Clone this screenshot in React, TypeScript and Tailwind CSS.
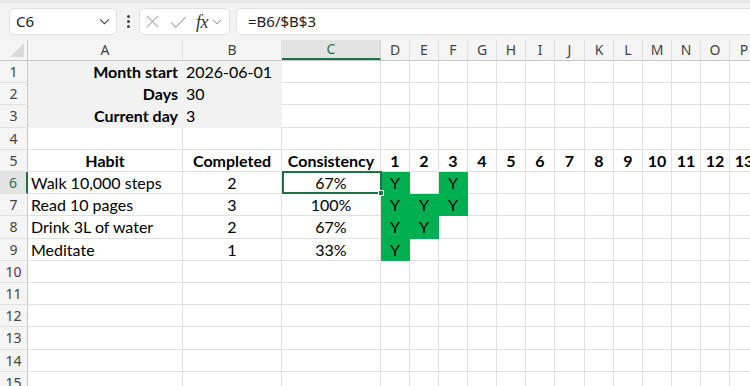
import React from 'react';

const cols = [
	{ key: 'A', w: 155 },
	{ key: 'B', w: 99 },
	{ key: 'C', w: 99 },
	{ key: 'D', w: 29 },
	{ key: 'E', w: 29 },
	{ key: 'F', w: 29 },
	{ key: 'G', w: 29 },
	{ key: 'H', w: 29 },
	{ key: 'I', w: 29 },
	{ key: 'J', w: 30 },
	{ key: 'K', w: 29 },
	{ key: 'L', w: 29 },
	{ key: 'M', w: 29 },
	{ key: 'N', w: 29 },
	{ key: 'O', w: 29 },
	{ key: 'P', w: 29 },
];

const rowHeights = [22, 22, 23, 22, 22, 22, 22, 23, 22, 22, 22, 22, 23, 22, 22];

type Cell = { v?: string; bold?: boolean; align?: 'left' | 'center' | 'right'; fill?: 'gray' | 'green' };

const habits = [
	{ name: 'Walk 10,000 steps', done: '2', pct: '67%', days: ['Y', '', 'Y'] },
	{ name: 'Read 10 pages', done: '3', pct: '100%', days: ['Y', 'Y', 'Y'] },
	{ name: 'Drink 3L of water', done: '2', pct: '67%', days: ['Y', 'Y', ''] },
	{ name: 'Meditate', done: '1', pct: '33%', days: ['Y', '', ''] },
];

const buildRows = (): Cell[][] => {
	const rows: Cell[][] = [];
	const info = [
		['Month start', '2026-06-01'],
		['Days', '30'],
		['Current day', '3'],
	];
	info.forEach(([label, value]) => {
		rows.push([
			{ v: label, bold: true, align: 'right', fill: 'gray' },
			{ v: value, align: 'left', fill: 'gray' },
		]);
	});
	rows.push([]);
	const head: Cell[] = [
		{ v: 'Habit', bold: true, align: 'center' },
		{ v: 'Completed', bold: true, align: 'center' },
		{ v: 'Consistency', bold: true, align: 'center' },
	];
	for (let d = 1; d <= 13; d++) head.push({ v: String(d), bold: true, align: 'center' });
	rows.push(head);
	habits.forEach((h) => {
		const r: Cell[] = [
			{ v: h.name, align: 'left' },
			{ v: h.done, align: 'center' },
			{ v: h.pct, align: 'center' },
		];
		h.days.forEach((d) => r.push(d ? { v: d, align: 'center', fill: 'green' } : {}));
		rows.push(r);
	});
	while (rows.length < rowHeights.length) rows.push([]);
	return rows;
};

const Chevron = ({ className }: { className?: string }) => (
	<svg viewBox="0 0 12 8" className={className} fill="none" stroke="currentColor" strokeWidth="1.2">
		<path d="M1 1.5 L6 6.5 L11 1.5" />
	</svg>
);

const Toolbar = () => (
	<div className="h-[40px] bg-[#f3f3f3] border-t-[3px] border-[#e6e6e6] flex items-start pt-[5px] font-['Noto_Sans',sans-serif]">
		<div className="ml-[9px] w-[108px] h-[27px] bg-white border border-[#e0e0e0] rounded-[5px] flex items-center justify-between pl-[6px] pr-[6px]">
			<span className="text-[15px] text-[#222] leading-none">C6</span>
			<Chevron className="w-[11px] h-[7px] text-[#444]" />
		</div>
		<div className="w-[22px] h-[27px] flex flex-col items-center justify-center gap-[2px]">
			<span className="w-[3px] h-[3px] rounded-full bg-[#444]" />
			<span className="w-[3px] h-[3px] rounded-full bg-[#444]" />
			<span className="w-[3px] h-[3px] rounded-full bg-[#444]" />
		</div>
		<div className="w-[91px] h-[27px] bg-white border border-[#e0e0e0] rounded-[5px] flex items-center pl-[5px]">
			<svg viewBox="0 0 16 16" className="w-[15px] h-[15px] text-[#a8a8a8]" fill="none" stroke="currentColor" strokeWidth="1.1">
				<path d="M2 2 L14 14 M14 2 L2 14" />
			</svg>
			<svg viewBox="0 0 18 14" className="ml-[10px] w-[17px] h-[14px] text-[#a8a8a8]" fill="none" stroke="currentColor" strokeWidth="1.1">
				<path d="M1 7.5 L6 12.5 L17 1.5" />
			</svg>
			<span className="ml-[9px] text-[18px] leading-none italic text-[#333] font-['Liberation_Serif',serif] tracking-[-0.5px]">fx</span>
			<Chevron className="ml-[4px] w-[10px] h-[6px] text-[#777]" />
		</div>
		<div className="ml-[6px] flex-1 h-[27px] bg-white border border-r-0 border-[#e0e0e0] rounded-l-[5px] flex items-center pl-[11px]">
			<span className="text-[15px] text-[#222] leading-none">=B6/$B$3</span>
		</div>
	</div>
);

const ColumnHeader = () => (
	<div className="flex h-[21px] bg-[#f5f5f5] border-b border-[#c8c8c8] font-['Noto_Sans',sans-serif]">
		<div className="w-[28px] shrink-0 border-r border-[#c8c8c8] relative">
			<div className="absolute right-[3px] bottom-[3px] w-0 h-0 border-l-[14px] border-l-transparent border-b-[14px] border-b-[#dadada]" />
		</div>
		{cols.map((c) => {
			const active = c.key === 'C';
			return (
				<div
					key={c.key}
					style={{ width: c.w }}
					className={
						active
							? 'shrink-0 flex items-center justify-center text-[14px] text-[#1e7145] bg-[#e3e3e3] border-r border-[#d4d4d4] border-b-2 border-b-[#1e7145] leading-none'
							: 'shrink-0 flex items-center justify-center text-[14px] text-[#444] border-r border-[#e0e0e0] leading-none'
					}
				>
					{c.key}
				</div>
			);
		})}
	</div>
);

export default function App() {
	const rows = buildRows();
	return (
		<div className="w-[750px] h-[386px] overflow-hidden bg-white">
			<Toolbar />
			<ColumnHeader />
			<div className="relative">
				{rows.map((r, ri) => {
					const activeRow = ri === 5;
					return (
						<div key={ri} className="flex" style={{ height: rowHeights[ri] }}>
							<div
								className={
									activeRow
										? "w-[28px] shrink-0 bg-[#e3e3e3] border-r-2 border-[#1e7145] border-b border-b-[#e0e0e0] flex items-center justify-center text-[14px] text-[#1e7145] font-['Noto_Sans',sans-serif] leading-none"
										: "w-[28px] shrink-0 bg-[#f5f5f5] border-r border-[#c8c8c8] border-b border-b-[#e0e0e0] flex items-center justify-center text-[14px] text-[#444] font-['Noto_Sans',sans-serif] leading-none"
								}
							>
								{ri + 1}
							</div>
							{cols.map((c, ci) => {
								const cell = r[ci] || {};
								const fillCls =
									cell.fill === 'green'
										? 'bg-[#00b050] border-[#00b050]'
										: cell.fill === 'gray'
										? 'bg-[#f2f2f2] border-[#f2f2f2]'
										: 'bg-white border-[#e1e1e1]';
								const alignCls =
									cell.align === 'right'
										? 'justify-end pr-[4px]'
										: cell.align === 'center'
										? 'justify-center'
										: 'justify-start pl-[3px]';
								return (
									<div
										key={c.key}
										style={{ width: c.w }}
										className={`shrink-0 flex items-center overflow-visible whitespace-nowrap border-r border-b text-[16px] text-black font-['Lato',sans-serif] leading-none ${fillCls} ${alignCls} ${cell.bold ? 'font-bold' : ''}`}
									>
										{cell.v}
									</div>
								);
							})}
						</div>
					);
				})}
				<div className="absolute left-[282px] top-[110px] w-[100px] h-[23px] border-2 border-[#1e7145] pointer-events-none">
					<div className="absolute -right-[4px] -bottom-[4px] w-[6px] h-[6px] bg-[#1e7145] border border-white" />
				</div>
			</div>
		</div>
	);
}
